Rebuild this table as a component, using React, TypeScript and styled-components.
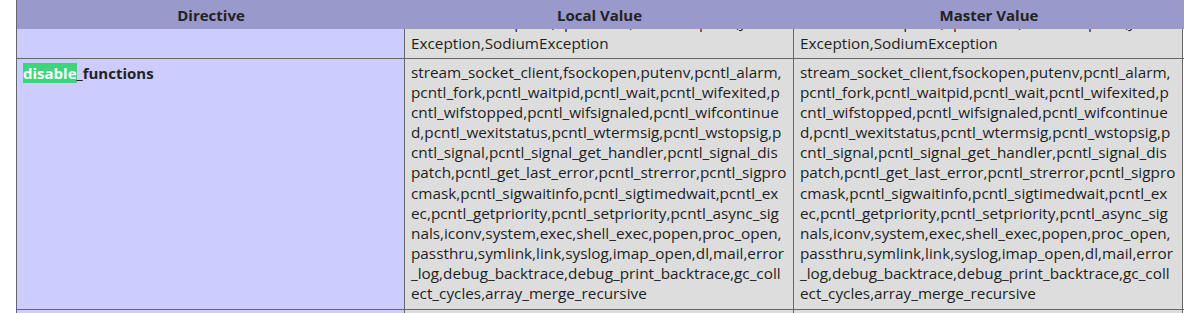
import React from "react";
import styled, { createGlobalStyle } from "styled-components";

const Global = createGlobalStyle`
  html, body { margin: 0; padding: 0; background: #ffffff; }
  body {
    font-family: "Open Sans", "Noto Sans", "Liberation Sans", sans-serif;
    color: #222;
    overflow: hidden;
  }
`;

const Page = styled.div`
  padding-left: 16px;
  width: 1170px;
`;

const Table = styled.div`
  width: 1167px;
  border-left: 1px solid #666;
`;

const HeadRow = styled.div`
  display: grid;
  grid-template-columns: 388px 389px 390px;
  height: 29px;
  background: #9999cc;
`;

const HeadCell = styled.div`
  display: flex;
  align-items: center;
  justify-content: center;
  font-size: 15px;
  font-weight: bold;
  color: #222;
`;

const Row = styled.div<{ $h: number }>`
  display: grid;
  grid-template-columns: 388px 389px 389px;
  grid-template-rows: ${(p) => p.$h}px;
  height: ${(p) => p.$h}px;
  border-bottom: 1px solid #666;
`;

const KeyCell = styled.div`
  background: #ccccff;
  border-right: 1px solid #666;
  padding: 4px 6px;
  font-size: 15px;
  line-height: 20.1px;
  font-weight: bold;
  white-space: nowrap;
  min-height: 0;
`;

const ValueCell = styled.div<{ $clip?: boolean }>`
  background: #dddddd;
  border-right: 1px solid #666;
  padding: ${(p) => (p.$clip ? "0 6px 5px 6px" : "3px 6px")};
  font-size: 15.3px;
  line-height: 20.1px;
  color: #1e1e1e;
  white-space: nowrap;
  overflow: hidden;
  min-height: 0;
  display: flex;
  flex-direction: column;
  justify-content: ${(p) => (p.$clip ? "flex-end" : "flex-start")};
`;

const Line = styled.div<{ $lift?: boolean }>`
  flex: none;
  margin-bottom: ${(p) => (p.$lift ? "1px" : "0")};
`;

const Mark = styled.span`
  background: #3dd47c;
  color: #ffffff;
`;

const prevLines = [
  "ReflectionException,SplFileInfo,PharException,JsonException,Random",
  "Exception,SodiumException",
];

const valueLines = [
  "stream_socket_client,fsockopen,putenv,pcntl_alarm,",
  "pcntl_fork,pcntl_waitpid,pcntl_wait,pcntl_wifexited,p",
  "cntl_wifstopped,pcntl_wifsignaled,pcntl_wifcontinue",
  "d,pcntl_wexitstatus,pcntl_wtermsig,pcntl_wstopsig,p",
  "cntl_signal,pcntl_signal_get_handler,pcntl_signal_dis",
  "patch,pcntl_get_last_error,pcntl_strerror,pcntl_sigpro",
  "cmask,pcntl_sigwaitinfo,pcntl_sigtimedwait,pcntl_ex",
  "ec,pcntl_getpriority,pcntl_setpriority,pcntl_async_sig",
  "nals,iconv,system,exec,shell_exec,popen,proc_open,",
  "passthru,symlink,link,syslog,imap_open,dl,mail,error",
  "_log,debug_backtrace,debug_print_backtrace,gc_coll",
  "ect_cycles,array_merge_recursive",
];

const Lines = ({ lines, lift }: { lines: string[]; lift?: boolean }) => (
  <>
    {lines.map((l, i) => (
      <Line key={i} $lift={lift && i < lines.length - 1}>
        {l}
      </Line>
    ))}
  </>
);

export default function App() {
  return (
    <Page>
      <Global />
      <Table>
        <HeadRow>
          <HeadCell>Directive</HeadCell>
          <HeadCell>Local Value</HeadCell>
          <HeadCell>Master Value</HeadCell>
        </HeadRow>
        <Row $h={29}>
          <KeyCell />
          <ValueCell $clip>
            <Lines lines={prevLines} lift />
          </ValueCell>
          <ValueCell $clip>
            <Lines lines={prevLines} lift />
          </ValueCell>
        </Row>
        <Row $h={250}>
          <KeyCell>
            <Mark>disable</Mark>_functions
          </KeyCell>
          <ValueCell>
            <Lines lines={valueLines} />
          </ValueCell>
          <ValueCell>
            <Lines lines={valueLines} />
          </ValueCell>
        </Row>
        <Row $h={20}>
          <KeyCell />
          <ValueCell />
          <ValueCell />
        </Row>
      </Table>
    </Page>
  );
}
